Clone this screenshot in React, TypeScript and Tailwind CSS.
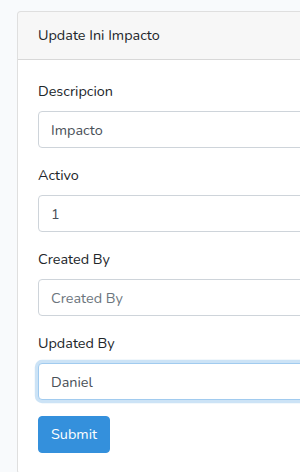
import React from 'react';

const fields = [
    { label: 'Descripcion', value: 'Impacto', placeholder: '' },
    { label: 'Activo', value: '1', placeholder: '' },
    { label: 'Created By', value: '', placeholder: 'Created By' },
];

const App: React.FC = () => {
    return (
        <div
            className="h-[472px] w-[300px] overflow-hidden bg-[#f8fafc] text-[14.4px] leading-[1.6] text-[#212529]"
            style={{ fontFamily: 'Nunito, Lato, "Noto Sans", sans-serif' }}
        >
            <div className="ml-[17px] mt-[11px] w-[320px] rounded-[4px] border border-[rgba(0,0,0,0.125)] bg-white">
                <div className="rounded-t-[3px] border-b border-[rgba(0,0,0,0.125)] bg-[rgba(0,0,0,0.03)] px-5 py-3">
                    Update Ini Impacto
                </div>
                <div className="p-5">
                    {fields.map((f) => (
                        <div key={f.label} className="mb-4">
                            <label className="mb-2 block">{f.label}</label>
                            <input
                                defaultValue={f.value}
                                placeholder={f.placeholder}
                                className="block h-[37px] w-full rounded-[4px] border border-[#ced4da] bg-white px-3 text-[#495057] outline-none placeholder:text-[#6c757d]"
                            />
                        </div>
                    ))}
                    <div className="mb-4">
                        <label className="mb-2 block">Updated By</label>
                        <input
                            defaultValue="Daniel"
                            className="block h-[37px] w-full rounded-[4px] border border-[#a1cbef] bg-white px-3 text-[#495057] shadow-[0_0_0_3.2px_rgba(52,144,220,0.25)] outline-none"
                        />
                    </div>
                    <button className="h-[37px] rounded-[4px] border border-[#3490dc] bg-[#3490dc] px-3 text-white">
                        Submit
                    </button>
                </div>
            </div>
        </div>
    );
};

export default App;
